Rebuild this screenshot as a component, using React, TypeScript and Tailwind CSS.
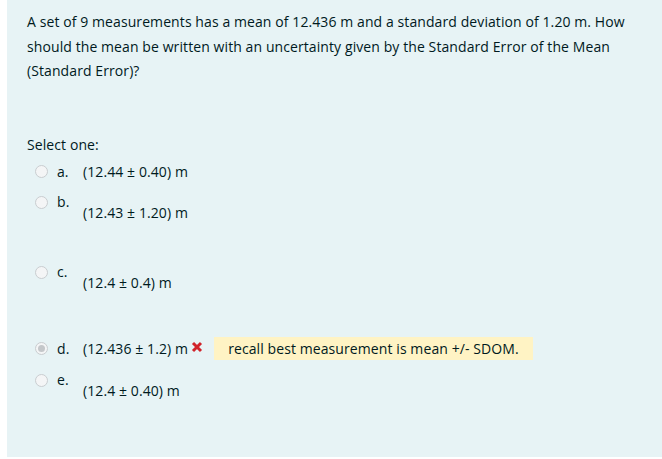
import React from "react";

const Radio = ({ checked = false }: { checked?: boolean }) => (
  <span className="flex h-[13px] w-[13px] shrink-0 items-center justify-center rounded-full border border-[#c9cdd0] bg-[#f4f5f6]">
    {checked && <span className="h-[7px] w-[7px] rounded-full bg-[#c4c7ca]" />}
  </span>
);

const Cross = () => (
  <svg width="12" height="12" viewBox="0 0 12 12" className="ml-[3px] mb-[4px]">
    <path d="M2 2 L10 10 M10 2 L2 10" stroke="#d1232a" strokeWidth="3" strokeLinecap="butt" />
  </svg>
);

export default function App() {
  return (
    <div className="h-[459px] w-[662px] bg-white pl-[7px]" style={{ fontFamily: '"Open Sans", "Noto Sans", sans-serif' }}>
      <div className="h-[457px] bg-[#e7f3f5] pl-[20px] pt-[10px] text-[14px] tracking-[0.09px] text-[#001a1e]">
        <p className="w-[615px] leading-[24.5px]">
          A set of 9 measurements has a mean of 12.436 m and a standard deviation of 1.20 m. How should the mean be written with an uncertainty given by the Standard Error of the Mean (Standard Error)?
        </p>
        <div className="mt-[51px] leading-[20px]">Select one:</div>
        <div className="ml-[8px] mt-[5px] flex flex-col">
          <div className="flex h-[24px] items-center">
            <Radio />
            <span className="ml-[9px] w-[26px]">a.</span>
            <span>(12.44 ± 0.40) m</span>
          </div>
          <div className="mt-[9px] flex h-[26px] items-start">
            <span className="mt-[3px]"><Radio /></span>
            <span className="ml-[9px] w-[26px] leading-[18px]">b.</span>
            <span className="mt-[11px] leading-[18px]">(12.43 ± 1.20) m</span>
          </div>
          <div className="mt-[44px] flex h-[26px] items-start">
            <span className="mt-[3px]"><Radio /></span>
            <span className="ml-[9px] w-[26px] leading-[18px]">c.</span>
            <span className="mt-[11px] leading-[18px]">(12.4 ± 0.4) m</span>
          </div>
          <div className="mt-[48px] flex h-[24px] items-center">
            <Radio checked />
            <span className="ml-[9px] w-[26px]">d.</span>
            <span className="tracking-[0.1px]">(12.436 ± 1.2) m</span>
            <Cross />
            <span className="ml-[11px] bg-[#fff3c4] px-[14px] leading-[23px]">recall best measurement is mean +/- SDOM.</span>
          </div>
          <div className="mt-[10px] flex h-[26px] items-start">
            <span className="mt-[3px]"><Radio /></span>
            <span className="ml-[9px] w-[26px] leading-[18px]">e.</span>
            <span className="mt-[11px] leading-[18px]">(12.4 ± 0.40) m</span>
          </div>
        </div>
      </div>
    </div>
  );
}
